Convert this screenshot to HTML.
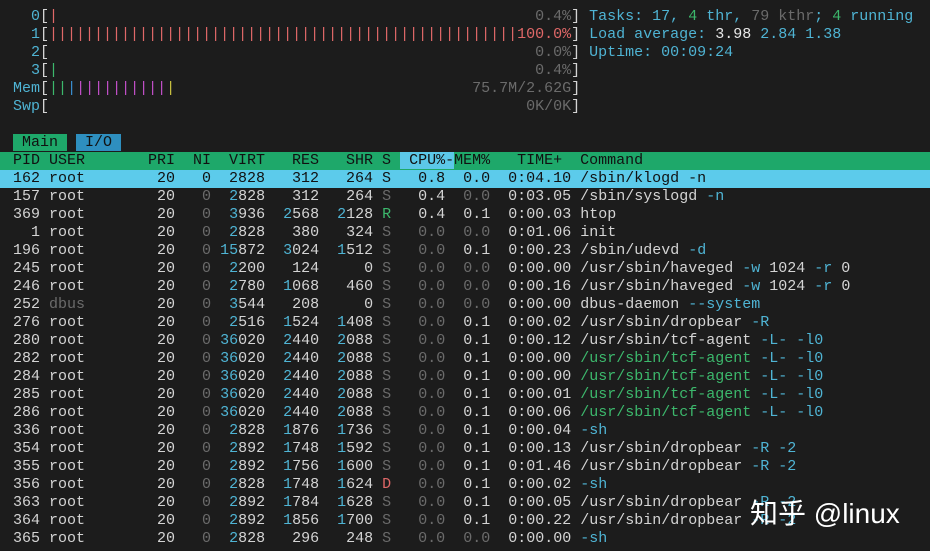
<!DOCTYPE html><html><head><meta charset="utf-8"><style>
body{margin:0;background:#1c1c1c;width:930px;height:551px;overflow:hidden;position:relative}
pre{position:absolute;left:4px;top:8px;margin:0;font:15px/18px "Liberation Mono","DejaVu Sans Mono",monospace;color:#d4d4d4;white-space:pre}
.c{color:#4fb4d4}.d{color:#6b6b6b}.g{color:#3cb86c}.r{color:#e06868}.m{color:#c24fc8}.b{color:#3a8ed0}.y{color:#c8c040}.w{color:#e8e8e8}
.hdr{background:#1ea86a;color:#111;display:inline-block;width:926px;margin-left:-4px;padding-left:4px}
.cp{background:#5cc8e8}
.sel{background:#5ccbeb;color:#111;display:inline-block;width:926px;margin-left:-4px;padding-left:4px}
.tm{background:#1ea86a;color:#111}.ti{background:#2e8fbf;color:#111}
.wm{position:absolute;left:750px;top:492px;font:28px "Liberation Sans","Noto Sans CJK SC",sans-serif;color:#fff}
</style></head><body><pre>   <span class="c">0</span>[<span class="r">|</span>                                                     <span class="d">0.4%</span>] <span class="c">Tasks: 17, </span><span class="g">4</span><span class="c"> thr, </span><span class="d">79 kthr</span><span class="c">; </span><span class="g">4</span><span class="c"> running</span>
   <span class="c">1</span>[<span class="r">||||||||||||||||||||||||||||||||||||||||||||||||||||100.0%</span>] <span class="c">Load average: </span><span class="w">3.98 </span><span class="c">2.84 1.38</span>
   <span class="c">2</span>[                                                      <span class="d">0.0%</span>] <span class="c">Uptime: 00:09:24</span>
   <span class="c">3</span>[<span class="g">|</span>                                                     <span class="d">0.4%</span>]
 <span class="c">Mem</span>[<span class="g">||</span><span class="b">|</span><span class="m">||||||||||</span><span class="y">|</span>                                 <span class="d">75.7M/2.62G</span>]
 <span class="c">Swp</span>[                                                     <span class="d">0K/0K</span>]

 <span class="tm"> Main </span> <span class="ti"> I/O </span>
<span class="hdr"> PID USER       PRI  NI  VIRT   RES   SHR S <span class="cp"> CPU%-</span>MEM%   TIME+  Command</span>
<span class="sel"> 162 root        20   0  2828   312   264 S   0.8  0.0  0:04.10 /sbin/klogd -n</span>
 157 root        20   <span class="d">0</span>  <span class="c">2</span>828   312   264 <span class="d">S</span>   0.4  <span class="d">0.0</span>  0:03.05 /sbin/syslogd <span class="c">-n</span>
 369 root        20   <span class="d">0</span>  <span class="c">3</span>936  <span class="c">2</span>568  <span class="c">2</span>128 <span class="g">R</span>   0.4  0.1  0:00.03 htop
   1 root        20   <span class="d">0</span>  <span class="c">2</span>828   380   324 <span class="d">S</span>   <span class="d">0.0</span>  <span class="d">0.0</span>  0:01.06 init
 196 root        20   <span class="d">0</span> <span class="c">15</span>872  <span class="c">3</span>024  <span class="c">1</span>512 <span class="d">S</span>   <span class="d">0.0</span>  0.1  0:00.23 /sbin/udevd <span class="c">-d</span>
 245 root        20   <span class="d">0</span>  <span class="c">2</span>200   124     0 <span class="d">S</span>   <span class="d">0.0</span>  <span class="d">0.0</span>  0:00.00 /usr/sbin/haveged <span class="c">-w</span> 1024 <span class="c">-r</span> 0
 246 root        20   <span class="d">0</span>  <span class="c">2</span>780  <span class="c">1</span>068   460 <span class="d">S</span>   <span class="d">0.0</span>  <span class="d">0.0</span>  0:00.16 /usr/sbin/haveged <span class="c">-w</span> 1024 <span class="c">-r</span> 0
 252 <span class="d">dbus</span>        20   <span class="d">0</span>  <span class="c">3</span>544   208     0 <span class="d">S</span>   <span class="d">0.0</span>  <span class="d">0.0</span>  0:00.00 dbus-daemon <span class="c">--system</span>
 276 root        20   <span class="d">0</span>  <span class="c">2</span>516  <span class="c">1</span>524  <span class="c">1</span>408 <span class="d">S</span>   <span class="d">0.0</span>  0.1  0:00.02 /usr/sbin/dropbear <span class="c">-R</span>
 280 root        20   <span class="d">0</span> <span class="c">36</span>020  <span class="c">2</span>440  <span class="c">2</span>088 <span class="d">S</span>   <span class="d">0.0</span>  0.1  0:00.12 /usr/sbin/tcf-agent <span class="c">-L- -l0</span>
 282 root        20   <span class="d">0</span> <span class="c">36</span>020  <span class="c">2</span>440  <span class="c">2</span>088 <span class="d">S</span>   <span class="d">0.0</span>  0.1  0:00.00 <span class="g">/usr/sbin/tcf-agent</span> <span class="c">-L- -l0</span>
 284 root        20   <span class="d">0</span> <span class="c">36</span>020  <span class="c">2</span>440  <span class="c">2</span>088 <span class="d">S</span>   <span class="d">0.0</span>  0.1  0:00.00 <span class="g">/usr/sbin/tcf-agent</span> <span class="c">-L- -l0</span>
 285 root        20   <span class="d">0</span> <span class="c">36</span>020  <span class="c">2</span>440  <span class="c">2</span>088 <span class="d">S</span>   <span class="d">0.0</span>  0.1  0:00.01 <span class="g">/usr/sbin/tcf-agent</span> <span class="c">-L- -l0</span>
 286 root        20   <span class="d">0</span> <span class="c">36</span>020  <span class="c">2</span>440  <span class="c">2</span>088 <span class="d">S</span>   <span class="d">0.0</span>  0.1  0:00.06 <span class="g">/usr/sbin/tcf-agent</span> <span class="c">-L- -l0</span>
 336 root        20   <span class="d">0</span>  <span class="c">2</span>828  <span class="c">1</span>876  <span class="c">1</span>736 <span class="d">S</span>   <span class="d">0.0</span>  0.1  0:00.04 <span class="c">-sh</span>
 354 root        20   <span class="d">0</span>  <span class="c">2</span>892  <span class="c">1</span>748  <span class="c">1</span>592 <span class="d">S</span>   <span class="d">0.0</span>  0.1  0:00.13 /usr/sbin/dropbear <span class="c">-R -2</span>
 355 root        20   <span class="d">0</span>  <span class="c">2</span>892  <span class="c">1</span>756  <span class="c">1</span>600 <span class="d">S</span>   <span class="d">0.0</span>  0.1  0:01.46 /usr/sbin/dropbear <span class="c">-R -2</span>
 356 root        20   <span class="d">0</span>  <span class="c">2</span>828  <span class="c">1</span>748  <span class="c">1</span>624 <span class="r">D</span>   <span class="d">0.0</span>  0.1  0:00.02 <span class="c">-sh</span>
 363 root        20   <span class="d">0</span>  <span class="c">2</span>892  <span class="c">1</span>784  <span class="c">1</span>628 <span class="d">S</span>   <span class="d">0.0</span>  0.1  0:00.05 /usr/sbin/dropbear <span class="c">-R -2</span>
 364 root        20   <span class="d">0</span>  <span class="c">2</span>892  <span class="c">1</span>856  <span class="c">1</span>700 <span class="d">S</span>   <span class="d">0.0</span>  0.1  0:00.22 /usr/sbin/dropbear <span class="c">-R -2</span>
 365 root        20   <span class="d">0</span>  <span class="c">2</span>828   296   248 <span class="d">S</span>   <span class="d">0.0</span>  <span class="d">0.0</span>  0:00.00 <span class="c">-sh</span></pre>
<div class="wm">知乎 @linux</div>
</body></html>
